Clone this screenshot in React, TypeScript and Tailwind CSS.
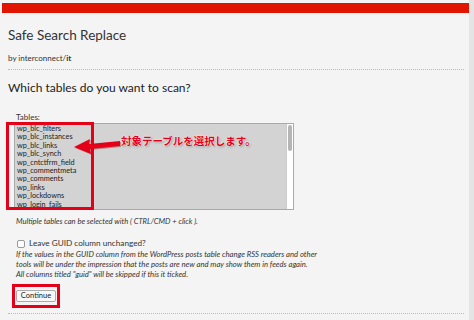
import React from 'react';

const tables = [
  'wp_blc_filters',
  'wp_blc_instances',
  'wp_blc_links',
  'wp_blc_synch',
  'wp_cntctfrm_field',
  'wp_commentmeta',
  'wp_comments',
  'wp_links',
  'wp_lockdowns',
  'wp_login_fails',
];

const font = { fontFamily: 'Lato, "Open Sans", sans-serif' };

export default function App() {
  return (
    <div className="w-[474px] h-[320px] overflow-hidden flex bg-[#f4f4f4] text-[#333]" style={font}>
      <div className="w-[469px] pt-[3px] pl-[2px] flex flex-col">
        <div className="h-[10px] bg-[#e11400]" />
        <div className="pl-[6px] pr-[5px]">
          <h1 className="mt-[13px] text-[13.5px] leading-[18px] text-[#333]">Safe Search Replace</h1>
          <p className="mt-[9px] text-[8px] leading-[10px]">
            by interconnect/<b>it</b>
          </p>
          <div className="mt-[6px] border-t border-dotted border-[#bbb]" />
          <h2 className="mt-[10px] text-[12px] leading-[16px] text-[#222]">Which tables do you want to scan?</h2>

          <div className="mt-[17px] pl-[6px] relative">
            <div className="pl-[2px] text-[8px] leading-[9px]">Tables:</div>
            <div className="mt-[1px] w-[280px] h-[87px] bg-[#d3d3d3] border border-[#aaa] flex">
              <ul className="flex-1 pl-[2px] pt-[1px] text-[7.3px] leading-[8.4px] text-[#222]">
                {tables.map((t) => (
                  <li key={t}>{t}</li>
                ))}
              </ul>
              <div className="w-[7px] bg-white border-l border-[#ccc] pt-[1px] flex justify-center">
                <div className="w-[4px] h-[26px] rounded-full bg-[#b5b5b5]" />
              </div>
            </div>

            {/* annotation */}
            <div className="absolute left-[-2px] top-[9px] w-[88px] h-[88px] border-[3px] border-[#e5001a]" />
            <svg className="absolute left-[66px] top-[24px]" width="48" height="18" viewBox="0 0 48 18">
              <polygon points="0,11 16,3 15,8 46,5 46,10 16,13 17,18" fill="#7a0000" opacity="0.35" transform="translate(1,0)" />
              <polygon points="0,10 16,2 15,7 46,4 46,9 16,12 17,17" fill="#e5001a" />
            </svg>
            <div
              className="absolute left-[113px] top-[21px] text-[10.5px] leading-[14px] font-bold text-[#e5001a] whitespace-nowrap [text-shadow:0_0_1px_#fff,0_0_2px_#fff,1px_1px_2px_#888]"
              style={{ fontFamily: '"Noto Sans CJK JP", sans-serif' }}
            >
              対象テーブルを選択します。
            </div>
          </div>

          <p className="mt-[6px] pl-[8px] text-[7.6px] leading-[10px] italic">
            Multiple tables can be selected with ( CTRL/CMD + click ).
          </p>

          <label className="mt-[12px] pl-[9px] flex items-center gap-[4px] text-[8.2px] leading-[11px]">
            <span className="w-[8px] h-[8px] border border-[#999] rounded-[2px] bg-white" />
            Leave GUID column unchanged?
          </label>
          <div className="mt-[0px] pl-[8px] text-[7.7px] leading-[10px] italic">
            <p>If the values in the GUID column from the WordPress posts table change RSS readers and other</p>
            <p>tools will be under the impression that the posts are new and may show them in feeds again.</p>
            <p>All columns titled "guid" will be skipped if this it ticked.</p>
          </div>

          <div className="mt-[5px] ml-[4px] w-[48px] h-[24px] border-[3px] border-[#e5001a] flex items-center justify-center">
            <button className="w-[40px] h-[12px] border border-[#aaa] rounded-[2px] bg-[#f8f8f8] text-[7.5px] leading-[10px] text-[#222]">
              Continue
            </button>
          </div>

          <div className="mt-[5px] border-t border-dotted border-[#bbb]" />
        </div>
      </div>
      <div className="w-[5px] bg-[#e4e4e4]" />
    </div>
  );
}
